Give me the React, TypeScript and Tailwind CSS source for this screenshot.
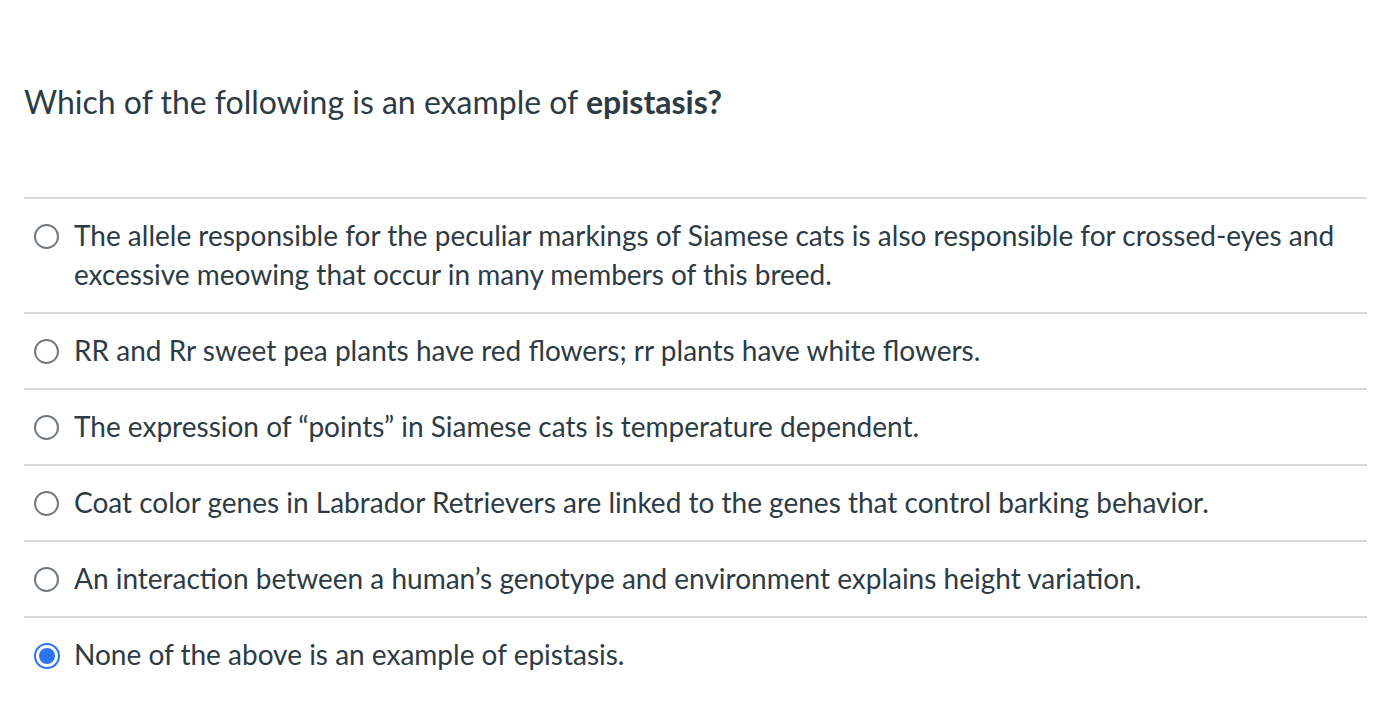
import { useState } from 'react';

const OPTIONS = [
  'The allele responsible for the peculiar markings of Siamese cats is also responsible for crossed-eyes and excessive meowing that occur in many members of this breed.',
  'RR and Rr sweet pea plants have red flowers; rr plants have white flowers.',
  'The expression of \u201Cpoints\u201D in Siamese cats is temperature dependent.',
  'Coat color genes in Labrador Retrievers are linked to the genes that control barking behavior.',
  'An interaction between a human\u2019s genotype and environment explains height variation.',
  'None of the above is an example of epistasis.',
];

function Radio({ checked }: { checked: boolean }) {
  if (checked) {
    return (
      <span className="w-[26px] h-[26px] rounded-full border-[2.5px] border-[#2d72f0] flex items-center justify-center shrink-0">
        <span className="w-[16px] h-[16px] rounded-full bg-[#2d72f0]" />
      </span>
    );
  }
  return <span className="w-[25px] h-[25px] rounded-full border-[2px] border-[#727a7f] shrink-0" />;
}

export default function App() {
  const [selected, setSelected] = useState(5);

  return (
    <div className="min-h-screen bg-white text-[#2d3b45] font-['Lato','Liberation_Sans',sans-serif]">
      <div className="pl-[24px] pr-[27px] pt-[80px]">
        <h2 className="text-[32px] leading-[44px] mb-[73px]">
          Which of the following is an example of <strong className="font-bold">epistasis?</strong>
        </h2>
        <div className="border-t-[2px] border-[#dadada]">
          {OPTIONS.map((opt, i) => (
            <label
              key={i}
              onClick={() => setSelected(i)}
              className="flex items-start pl-[10px] pr-[20px] pt-[17px] pb-[18px] border-b-[2px] border-[#dadada] last:border-b-0 cursor-pointer"
            >
              <span className="w-[40px] h-[39px] pt-[2px] flex items-center shrink-0">
                <Radio checked={selected === i} />
              </span>
              <span className="text-[28px] leading-[39px]">{opt}</span>
            </label>
          ))}
        </div>
      </div>
    </div>
  );
}
